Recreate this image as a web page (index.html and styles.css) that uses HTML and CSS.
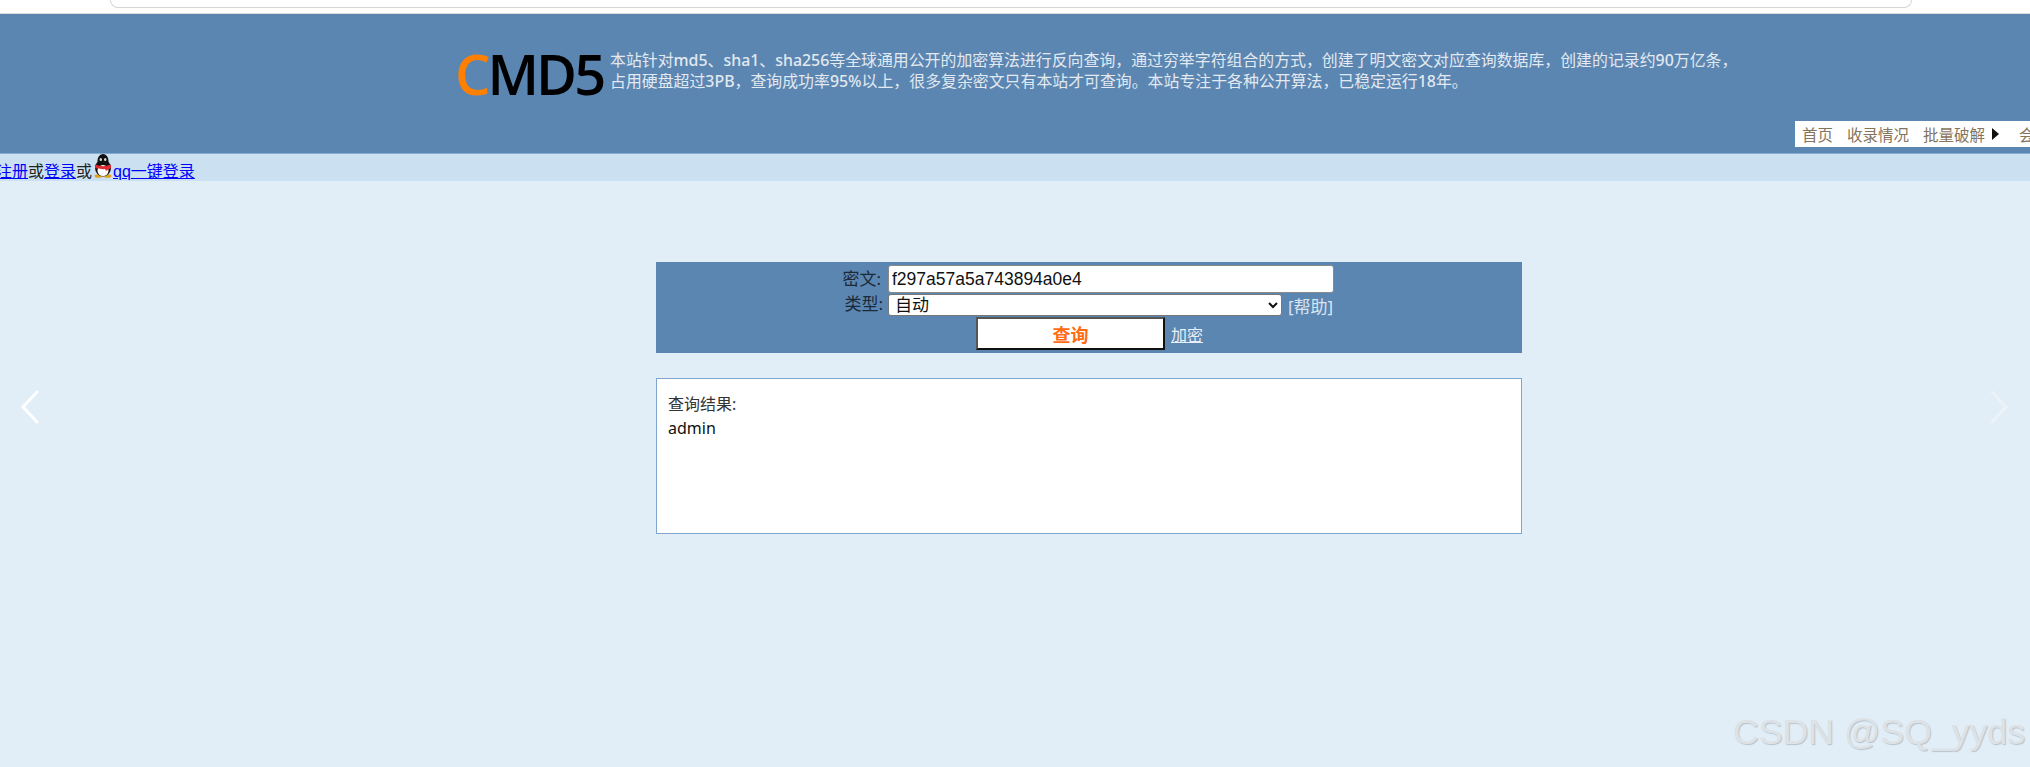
FILE: index.html
```html
<!DOCTYPE html>
<html lang="zh-CN">
    <head>
        <meta charset="UTF-8">
        <title>md5在线解密破解,md5解密加密</title>
        <link rel="stylesheet" href="styles.css">
    </head>
<body>
    <div class="browser-edge">
        <div class="url-box"></div>
    </div>

    <div class="header">
        <div class="intro">
            <div class="logo"><span class="logo-c">C</span>MD5</div>
            <div class="intro-text">
                本站针对<b>md5</b>、<b>sha1</b>、<b>sha256</b>等全球通用公开的加密算法进行反向查询，通过穷举字符组合的方式，创建了明文密文对应查询数据库，创建的记录约<b>90</b>万亿条，<br>
                占用硬盘超过<b>3PB</b>，查询成功率<b>95%</b>以上，很多复杂密文只有本站才可查询。本站专注于各种公开算法，已稳定运行<b>18</b>年。
            </div>
        </div>
        <div class="menu">
            <span>首页</span>
            <span>收录情况</span>
            <span class="menu-more">批量破解<i class="menu-arrow"></i></span>
            <span>会员充值</span>
        </div>
    </div>

    <div class="login-bar">
        <a href="#">注册</a>或<a href="#">登录</a>或<svg class="qq" viewBox="0 0 18 24" width="18" height="24">
            <ellipse cx="4.5" cy="22" rx="4" ry="1.8" fill="#e0a020"/>
            <ellipse cx="13.5" cy="22" rx="4" ry="1.8" fill="#e0a020"/>
            <ellipse cx="9" cy="14" rx="8" ry="8.5" fill="#111"/>
            <ellipse cx="9" cy="6.5" rx="5.5" ry="6.5" fill="#111"/>
            <ellipse cx="9" cy="16.5" rx="5.5" ry="5.5" fill="#fff"/>
            <ellipse cx="6.8" cy="5.5" rx="1.2" ry="1.6" fill="#ddd"/>
            <ellipse cx="11.2" cy="5.5" rx="1.2" ry="1.6" fill="#ddd"/>
            <path d="M1.5 10.5 Q9 14 16.500 10.500 L17 14 Q13 16 12 17 L11 15 Q9 15.500 5 14.500 Q3 14.500 1 14 Z" fill="#e02a30"/>
        </svg><a href="#">qq一键登录</a>
    </div>

    <div class="main">
        <form class="search-box">
            <label class="search-label">密文:</label>
            <input class="search-input" type="text" value="f297a57a5a743894a0e4">
            <label class="search-label search-label-type">类型:</label>
            <div class="type-row">
                <select class="search-select">
                    <option>自动</option>
                </select>
                <a class="help-link" href="#">[帮助]</a>
            </div>
            <div class="button-row">
                <button class="search-button" type="button">查询</button>
                <a class="encrypt-link" href="#">加密</a>
            </div>
        </form>

        <div class="result">
            <div>查询结果:</div>
            <div class="result-value">admin</div>
        </div>
    </div>

    <svg class="arrow arrow-left" viewBox="0 0 18 34" width="18" height="34">
        <path d="M16 2 L2 17 L16 32"/>
    </svg>
    <svg class="arrow arrow-right" viewBox="0 0 18 34" width="18" height="34">
        <path d="M2 2 L16 17 L2 32"/>
    </svg>

    <div class="watermark">CSDN @SQ_yyds</div>
</body>
</html>
```

FILE: styles.css
```css
html, body {
    height: 100%;
}
body {
    margin: 0;
    overflow: hidden;
    position: relative;
    background-color: #e1eef7;
    color: #222;
    font-family: "Noto Sans", "Noto Sans CJK SC", sans-serif;
}
.browser-edge {
    height: 13px;
    background-color: #fff;
    border-bottom: 1px solid #dcdcdc;
    padding: 0 118px 0 110px;
}
.url-box {
    height: 7px;
    background-color: #fff;
    border: 1px solid #d4d4d4;
    border-top: none;
    border-radius: 0 0 14px 14px;
}
.header {
    height: 140px;
    box-sizing: border-box;
    background-color: #5b86b2;
    border-bottom: 1px solid #85aad0;
    display: flex;
    flex-direction: column;
    justify-content: space-between;
    padding-bottom: 6px;
}
.intro {
    display: flex;
    align-items: flex-start;
    padding: 36px 0 0 455px;
}
.logo {
    font-family: "Open Sans", sans-serif;
    font-weight: 600;
    font-size: 56px;
    line-height: 56px;
    letter-spacing: -3px;
    color: #000;
    width: 155px;
    margin-top: -5px;
    flex: none;
}
.logo-c {
    color: #ff8000;
}
.intro-text {
    color: #e2e9f0;
    font-size: 15.9px;
    line-height: 21px;
    white-space: nowrap;
}
.intro-text b {
    font-weight: 500;
}
.menu {
    align-self: flex-end;
    width: 235px;
    height: 26px;
    box-sizing: border-box;
    background-color: #fff;
    display: flex;
    align-items: center;
    gap: 14px;
    padding-left: 7px;
    font-size: 15.5px;
    color: #85745c;
    white-space: nowrap;
    overflow: hidden;
}
.menu-more {
    display: flex;
    align-items: center;
    gap: 7px;
    margin-right: 6px;
}
.menu-arrow {
    width: 0;
    height: 0;
    border-left: 7px solid #111;
    border-top: 6px solid transparent;
    border-bottom: 6px solid transparent;
}
.login-bar {
    height: 27px;
    background-color: #cbe0f0;
    font-family: "Liberation Sans", "Noto Sans CJK SC", sans-serif;
    font-size: 16px;
    line-height: 28px;
    text-indent: -4px;
    white-space: nowrap;
}
.login-bar a {
    color: #0000ff;
}
.qq {
    margin-left: 2px;
    margin-right: 1px;
    vertical-align: -1px;
}
.main {
    display: flex;
    flex-direction: column;
    gap: 25px;
    width: 866px;
    margin-left: 656px;
    padding-top: 81px;
}
.search-box {
    height: 91px;
    box-sizing: border-box;
    background-color: #5b86b2;
    padding: 3px 0 0;
    display: grid;
    grid-template-columns: 232px 1fr;
    align-content: start;
}
.search-label {
    text-align: right;
    padding-right: 7px;
    font-size: 17px;
    line-height: 28px;
    color: #1c2a38;
}
.search-label-type {
    padding-right: 5px;
    line-height: 22px;
}
.search-input {
    width: 446px;
    height: 28px;
    box-sizing: border-box;
    border: 1px solid #8a8a8a;
    border-radius: 3px;
    padding: 0 3px;
    font-family: "Liberation Sans", sans-serif;
    font-size: 17.5px;
    color: #111;
}
.type-row {
    display: flex;
    align-items: center;
    gap: 6px;
    height: 22px;
    margin-top: 1px;
}
.search-select {
    width: 394px;
    height: 22px;
    box-sizing: border-box;
    background-color: #fff;
    border: 1px solid #777;
    border-radius: 3px;
    padding: 0 2px;
    font-family: "Liberation Sans", "Noto Sans CJK SC", sans-serif;
    font-size: 17px;
    color: #111;
}
.help-link {
    color: #d8e4ef;
    font-size: 17px;
    text-decoration: none;
}
.button-row {
    grid-column: 1 / 3;
    display: flex;
    align-items: center;
    gap: 6px;
    padding-left: 320px;
    margin-top: 1px;
}
.search-button {
    width: 189px;
    height: 33px;
    box-sizing: border-box;
    background-color: #fff;
    border: 2px solid #111;
    border-top-color: #555;
    border-left-color: #555;
    color: #ff6a13;
    font-family: "Liberation Sans", "Noto Sans CJK SC", sans-serif;
    font-size: 18px;
    font-weight: bold;
    padding: 0;
}
.encrypt-link {
    color: #e8eff6;
    font-size: 16px;
}
.result {
    height: 156px;
    box-sizing: border-box;
    background-color: #fff;
    border: 1px solid #7fa6cf;
    padding: 13px 11px;
    font-size: 16px;
    line-height: 24px;
    color: #333;
}
.result-value {
    color: #111;
}
.arrow {
    position: absolute;
    top: 390px;
    fill: none;
    stroke: #fff;
    stroke-width: 3;
    stroke-linecap: round;
}
.arrow-left {
    left: 21px;
}
.arrow-right {
    right: 22px;
    opacity: 0.35;
}
.watermark {
    position: absolute;
    right: 5px;
    bottom: 14px;
    font-family: "Liberation Sans", sans-serif;
    font-size: 35.7px;
    color: #dde2e6;
    text-shadow: 1px 1px 1px #b8c2cb;
}
```
